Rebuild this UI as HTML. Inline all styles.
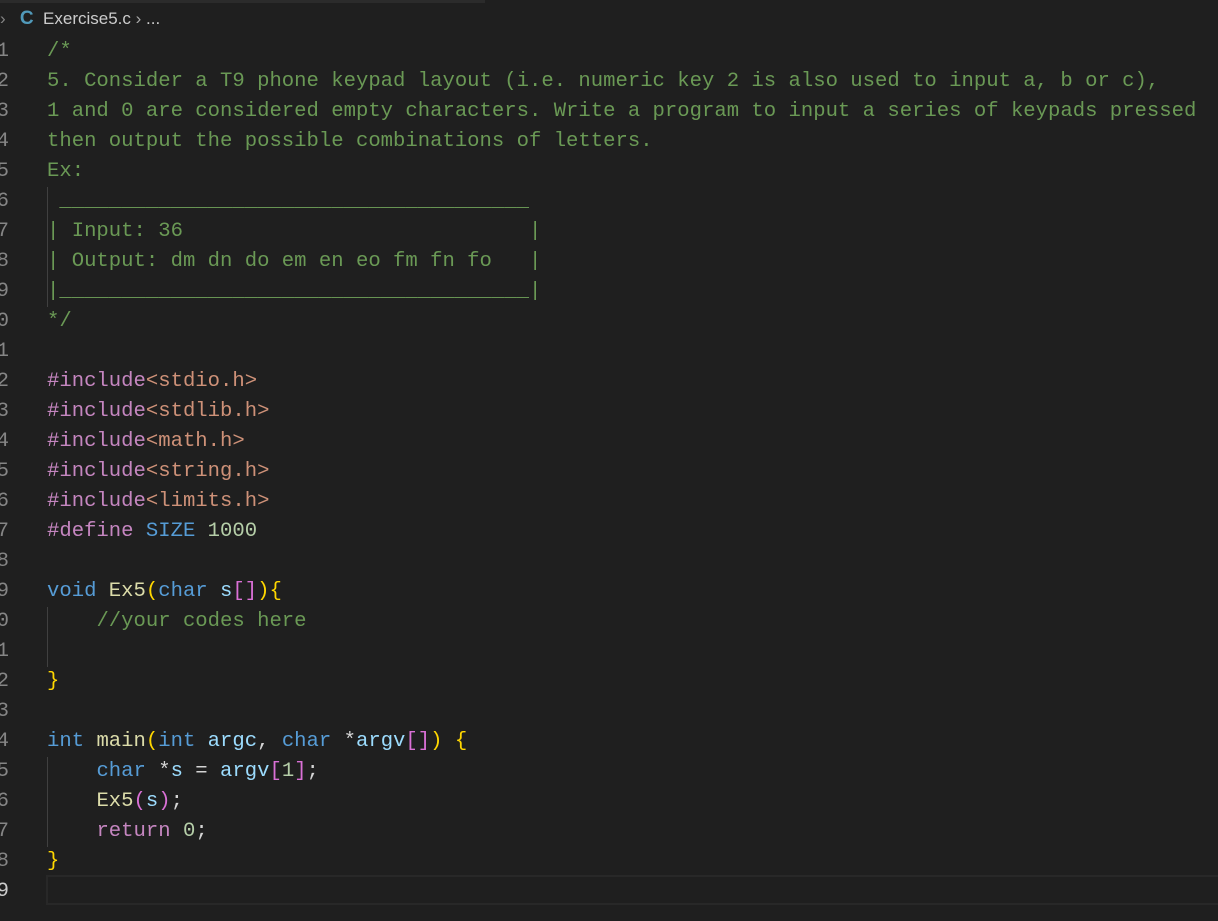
<!DOCTYPE html>
<html><head><meta charset="utf-8"><style>
body{margin:0;background:#1f1f1f;width:1218px;height:921px;overflow:hidden;position:relative;font-family:"Liberation Mono",monospace;}
.top{position:absolute;left:0;top:0;width:485px;height:3px;background:#2b2b2b;}
.bc{position:absolute;top:8px;left:0;height:24px;font-family:"Liberation Sans",sans-serif;font-size:17px;color:#cccccc;white-space:nowrap;}
.ln{position:absolute;left:-20px;width:29px;text-align:right;font-size:20.6px;color:#858585;line-height:30px;}
.code{position:absolute;left:47px;top:37px;font-size:20.6px;line-height:30px;color:#d4d4d4;white-space:pre;}
.c{color:#6a9955}.k{color:#569cd6}.p{color:#c586c0}.s{color:#ce9178}.f{color:#dcdcaa}.v{color:#9cdcfe}.n{color:#b5cea8}.y{color:#ffd700}.m{color:#da70d6}.b{color:#179fff}
.g{position:absolute;left:47px;width:1px;background:#404040;}
.cur{position:absolute;left:46px;top:875px;width:1180px;height:26px;border:2px solid #282828;}
</style></head><body>
<div class="top"></div>
<div class="bc"><span style="color:#858585">›</span>&nbsp;&nbsp;&nbsp;<b style="color:#519aba;font-size:19px">C</b>&nbsp;&nbsp;Exercise5.c <span style="color:#aaa">›</span> ...</div>
<div class="cur"></div>
<div class="g" style="top:187px;height:120px"></div>
<div class="g" style="top:607px;height:60px"></div>
<div class="g" style="top:757px;height:90px"></div>
<div class="ln" style="top:37px">1<br>2<br>3<br>4<br>5<br>6<br>7<br>8<br>9<br>0<br>1<br>2<br>3<br>4<br>5<br>6<br>7<br>8<br>9<br>0<br>1<br>2<br>3<br>4<br>5<br>6<br>7<br>8<br><span style="color:#ccc">9</span></div>
<div class="code"><span class="c">/*
5. Consider a T9 phone keypad layout (i.e. numeric key 2 is also used to input a, b or c),
1 and 0 are considered empty characters. Write a program to input a series of keypads pressed
then output the possible combinations of letters.
Ex:
 ______________________________________
| Input: 36                            |
| Output: dm dn do em en eo fm fn fo   |
|______________________________________|
*/</span>

<span class="p">#include</span><span class="s">&lt;stdio.h&gt;</span>
<span class="p">#include</span><span class="s">&lt;stdlib.h&gt;</span>
<span class="p">#include</span><span class="s">&lt;math.h&gt;</span>
<span class="p">#include</span><span class="s">&lt;string.h&gt;</span>
<span class="p">#include</span><span class="s">&lt;limits.h&gt;</span>
<span class="p">#define</span> <span class="k">SIZE</span> <span class="n">1000</span>

<span class="k">void</span> <span class="f">Ex5</span><span class="y">(</span><span class="k">char</span> <span class="v">s</span><span class="m">[]</span><span class="y">){</span>
    <span class="c">//your codes here</span>

<span class="y">}</span>

<span class="k">int</span> <span class="f">main</span><span class="y">(</span><span class="k">int</span> <span class="v">argc</span>, <span class="k">char</span> *<span class="v">argv</span><span class="m">[]</span><span class="y">)</span> <span class="y">{</span>
    <span class="k">char</span> *<span class="v">s</span> = <span class="v">argv</span><span class="m">[</span><span class="n">1</span><span class="m">]</span>;
    <span class="f">Ex5</span><span class="m">(</span><span class="v">s</span><span class="m">)</span>;
    <span class="p">return</span> <span class="n">0</span>;
<span class="y">}</span>
</div>
</body></html>
